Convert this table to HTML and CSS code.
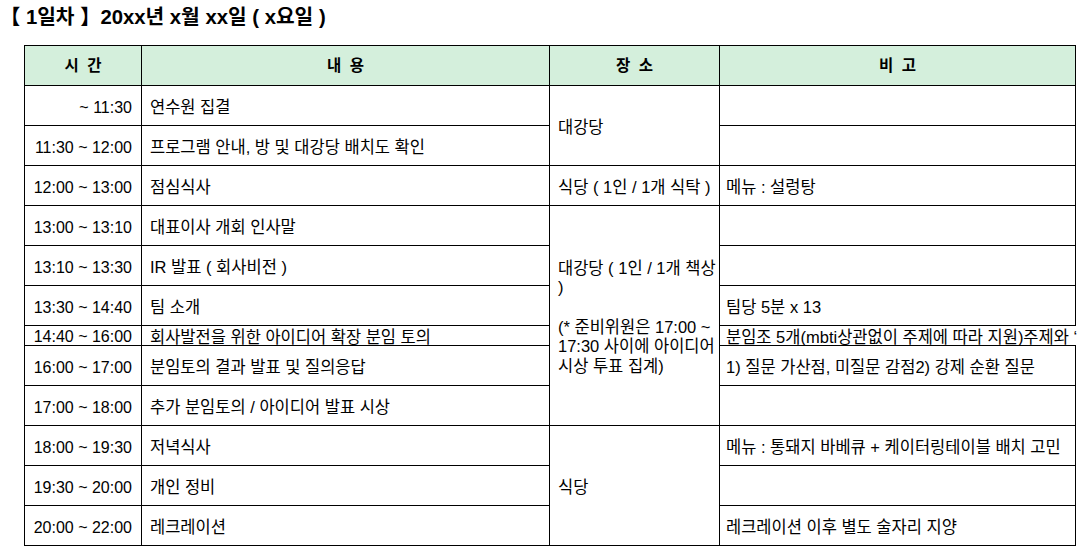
FILE: index.html
```html
<!DOCTYPE html>
<html lang="ko">
<head>
<meta charset="utf-8">
<title>1일차 일정</title>
<link rel="stylesheet" href="styles.css">
</head>
<body>
<div class="title">【 1일차 】20xx년 x월 xx일 ( x요일 )</div>
<table class="schedule">
  <colgroup>
    <col class="c-time">
    <col class="c-content">
    <col class="c-place">
    <col class="c-note">
  </colgroup>
  <thead>
    <tr class="head">
      <th>시&nbsp;&nbsp;간</th>
      <th>내&nbsp;&nbsp;용</th>
      <th>장&nbsp;&nbsp;소</th>
      <th>비&nbsp;&nbsp;고</th>
    </tr>
  </thead>
  <tbody>
    <tr>
      <td class="time">~ 11:30</td>
      <td class="content">연수원 집결</td>
      <td class="place" rowspan="2">대강당</td>
      <td class="note"></td>
    </tr>
    <tr>
      <td class="time">11:30 ~ 12:00</td>
      <td class="content">프로그램 안내, 방 및 대강당 배치도 확인</td>
      <td class="note"></td>
    </tr>
    <tr>
      <td class="time">12:00 ~ 13:00</td>
      <td class="content">점심식사</td>
      <td class="place">식당 ( 1인 / 1개 식탁 )</td>
      <td class="note">메뉴 : 설렁탕</td>
    </tr>
    <tr>
      <td class="time">13:00 ~ 13:10</td>
      <td class="content">대표이사 개회 인사말</td>
      <td class="place multi" rowspan="6">대강당 ( 1인 / 1개 책상<br>)<br><br>(* 준비위원은 17:00 ~<br>17:30 사이에 아이디어<br>시상 투표 집계)</td>
      <td class="note"></td>
    </tr>
    <tr>
      <td class="time">13:10 ~ 13:30</td>
      <td class="content">IR 발표 ( 회사비전 )</td>
      <td class="note"></td>
    </tr>
    <tr>
      <td class="time">13:30 ~ 14:40</td>
      <td class="content">팀 소개</td>
      <td class="note">팀당 5분 x 13</td>
    </tr>
    <tr class="short">
      <td class="time">14:40 ~ 16:00</td>
      <td class="content">회사발전을 위한 아이디어 확장 분임 토의</td>
      <td class="note spill">분임조 5개(mbti상관없이 주제에 따라 지원)주제와 ‘</td>
    </tr>
    <tr>
      <td class="time">16:00 ~ 17:00</td>
      <td class="content">분임토의 결과 발표 및 질의응답</td>
      <td class="note">1) 질문 가산점, 미질문 감점2) 강제 순환 질문</td>
    </tr>
    <tr>
      <td class="time">17:00 ~ 18:00</td>
      <td class="content">추가 분임토의 / 아이디어 발표 시상</td>
      <td class="note"></td>
    </tr>
    <tr>
      <td class="time">18:00 ~ 19:30</td>
      <td class="content">저녁식사</td>
      <td class="place" rowspan="3">식당</td>
      <td class="note">메뉴 : 통돼지 바베큐 + 케이터링테이블 배치 고민</td>
    </tr>
    <tr>
      <td class="time">19:30 ~ 20:00</td>
      <td class="content">개인 정비</td>
      <td class="note"></td>
    </tr>
    <tr>
      <td class="time">20:00 ~ 22:00</td>
      <td class="content">레크레이션</td>
      <td class="note">레크레이션 이후 별도 술자리 지양</td>
    </tr>
  </tbody>
</table>
</body>
</html>
```

FILE: styles.css
```css
html, body {
  overflow: hidden;
}

body {
  margin: 0;
  background: #ffffff;
  color: #000000;
  font-family: "Liberation Sans", "Noto Sans CJK KR", sans-serif;
}

.title {
  box-sizing: border-box;
  height: 45px;
  padding-top: 4px;
  font-size: 20.3px;
  line-height: 26px;
  font-weight: bold;
  white-space: nowrap;
}

.schedule {
  margin-left: 24px;
  width: 1051px;
  table-layout: fixed;
  border-collapse: collapse;
  font-size: 16.5px;
}

.c-time { width: 117px; }
.c-content { width: 408px; }
.c-place { width: 170px; }
.c-note { width: 356px; }

.schedule tr {
  height: 40px;
}

.schedule tr.short {
  height: 20px;
}

.schedule th,
.schedule td {
  border: 1px solid #000000;
  padding: 0;
  line-height: 19px;
  white-space: nowrap;
  overflow: visible;
  vertical-align: middle;
  text-align: left;
}

.schedule td {
  padding-top: 4px;
}

.schedule tr.short td {
  padding-top: 3px;
  line-height: 16px;
}

.schedule th {
  background: #d4efdc;
  text-align: center;
  font-weight: bold;
  font-size: 15.5px;
}

.schedule td.time {
  text-align: right;
  padding-right: 9px;
  font-size: 16px;
}

.schedule td.content {
  padding-left: 8px;
}

.schedule td.place {
  padding-left: 8px;
}

.schedule td.multi {
  line-height: 19.6px;
}

.schedule td.note {
  padding-left: 6px;
}

.schedule td.spill {
  border-right-style: hidden;
}
```
